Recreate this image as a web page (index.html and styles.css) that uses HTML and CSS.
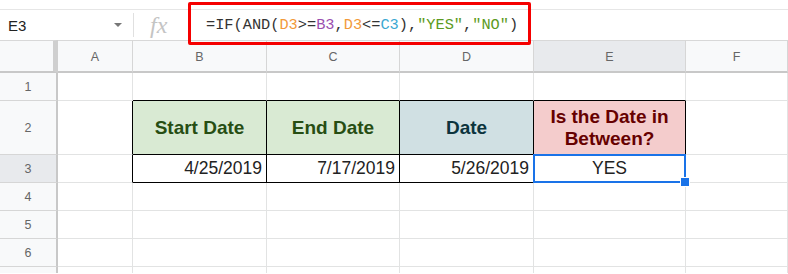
FILE: index.html
```html
<!DOCTYPE html>
<html lang="en">
<head>
    <meta charset="UTF-8">
    <meta name="viewport" content="width=device-width, initial-scale=1.0">
    <title>Sheet - date between check</title>
    <link rel="stylesheet" href="styles.css">
</head>
<body>
    <div class="toolbar-gap"></div>

    <div class="formula-bar">
        <div class="name-box">
            <span class="name-ref">E3</span>
            <span class="caret"></span>
        </div>
        <div class="fx">fx</div>
        <div class="formula">=IF(AND(<span class="ref-d">D3</span>&gt;=<span class="ref-b">B3</span>,<span class="ref-d">D3</span>&lt;=<span class="ref-c">C3</span>),<span class="str">"YES"</span>,<span class="str">"NO"</span>)</div>
        <div class="callout"></div>
    </div>

    <div class="sheet">
        <!-- column headers -->
        <div class="cell corner"></div>
        <div class="cell col-head">A</div>
        <div class="cell col-head">B</div>
        <div class="cell col-head">C</div>
        <div class="cell col-head">D</div>
        <div class="cell col-head active">E</div>
        <div class="cell col-head">F</div>

        <!-- row 1 -->
        <div class="cell row-head">1</div>
        <div class="cell"></div>
        <div class="cell top-edge"></div>
        <div class="cell top-edge"></div>
        <div class="cell top-edge"></div>
        <div class="cell top-edge"></div>
        <div class="cell"></div>

        <!-- row 2 -->
        <div class="cell row-head">2</div>
        <div class="cell left-edge"></div>
        <div class="cell boxed title green">Start Date</div>
        <div class="cell boxed title green">End Date</div>
        <div class="cell boxed title teal">Date</div>
        <div class="cell boxed title pink">Is the Date in<br>Between?</div>
        <div class="cell"></div>

        <!-- row 3 -->
        <div class="cell row-head active">3</div>
        <div class="cell left-edge"></div>
        <div class="cell boxed num">4/25/2019</div>
        <div class="cell boxed num">7/17/2019</div>
        <div class="cell boxed num">5/26/2019</div>
        <div class="cell boxed center selected">YES</div>
        <div class="cell"></div>

        <!-- rows 4-6 -->
        <div class="cell row-head">4</div>
        <div class="cell"></div><div class="cell"></div><div class="cell"></div>
        <div class="cell"></div><div class="cell"></div><div class="cell"></div>

        <div class="cell row-head">5</div>
        <div class="cell"></div><div class="cell"></div><div class="cell"></div>
        <div class="cell"></div><div class="cell"></div><div class="cell"></div>

        <div class="cell row-head">6</div>
        <div class="cell"></div><div class="cell"></div><div class="cell"></div>
        <div class="cell"></div><div class="cell"></div><div class="cell"></div>

        <!-- row 7, only its top edge is in view -->
        <div class="cell row-head"></div>
        <div class="cell"></div><div class="cell"></div><div class="cell"></div>
        <div class="cell"></div><div class="cell"></div><div class="cell"></div>
    </div>
</body>
</html>
```

FILE: styles.css
```css
* {
    margin: 0;
    padding: 0;
    box-sizing: border-box;
}
:root {
    --grid-line: #e2e3e3;
    --head-bg: #f8f9fa;
    --head-active: #e8eaed;
    --head-text: #666;
    --select-blue: #1a73e8;
}
body {
    font-family: 'Liberation Sans', Arial, sans-serif;
    background: #fff;
    color: #222;
    overflow: hidden;
}
.toolbar-gap {
    height: 10px;
    border-bottom: 1px solid #e6e6e6;
}
.formula-bar {
    position: relative;
    display: flex;
    align-items: center;
    height: 30px;
}
.name-box {
    width: 134px;
    height: 24px;
    display: flex;
    align-items: center;
    justify-content: space-between;
    padding: 0 11px 0 8px;
    border-right: 1px solid #e0e0e0;
}
.name-ref {
    font-size: 15px;
    color: #222;
}
.caret {
    width: 0;
    height: 0;
    border-left: 4px solid transparent;
    border-right: 4px solid transparent;
    border-top: 4px solid #777;
}
.fx {
    width: 54px;
    padding-left: 16px;
    font-family: 'Liberation Serif', serif;
    font-style: italic;
    font-size: 24px;
    color: #c4c4c4;
    line-height: 1;
}
.formula {
    padding-left: 18px;
    font-family: 'Liberation Mono', monospace;
    font-size: 15.3px;
    color: #333;
    white-space: nowrap;
}
.ref-d { color: #f29a3a; }
.ref-b { color: #9a4fb0; }
.ref-c { color: #3aa8d2; }
.str { color: #5c9a22; }
.callout {
    position: absolute;
    left: 188px;
    top: -8px;
    width: 343px;
    height: 43px;
    border: 3px solid #f50000;
    border-radius: 2px;
}
.sheet {
    display: grid;
    grid-template-columns: 58px 75px 134px 133px 134px 152px 1fr;
    grid-template-rows: 33px 28px 54px 28px 28px 28px 28px 7px;
    height: 233px;
    overflow: hidden;
}
.cell {
    display: flex;
    align-items: center;
    justify-content: center;
    border-right: 1px solid var(--grid-line);
    border-bottom: 1px solid var(--grid-line);
    font-size: 17.5px;
}
.corner {
    background: var(--head-bg);
    border-right: 5px solid #cfcfcf;
    border-bottom: 2px solid #c8c8c8;
    border-top: 1px solid #d8d8d8;
}
.col-head {
    background: var(--head-bg);
    color: var(--head-text);
    font-size: 12.5px;
    padding-top: 2px;
    border-top: 1px solid #d8d8d8;
    border-right-color: #d6d6d6;
    border-bottom: 2px solid #c8c8c8;
}
.row-head {
    background: var(--head-bg);
    color: var(--head-text);
    font-size: 12.5px;
    border-right: 2px solid #c8c8c8;
    border-bottom-color: #d6d6d6;
}
.col-head.active,
.row-head.active {
    background: var(--head-active);
}
.top-edge {
    border-bottom-color: #000;
}
.left-edge {
    border-right-color: #000;
}
.boxed {
    border-right-color: #000;
    border-bottom-color: #000;
}
.title {
    font-weight: 700;
    font-size: 19px;
    line-height: 22px;
    text-align: center;
}
.green {
    background: #d9ead3;
    color: #274e13;
}
.teal {
    background: #d0e0e3;
    color: #0c343d;
}
.pink {
    background: #f4cccc;
    color: #660000;
}
.num {
    justify-content: flex-end;
    padding-right: 4px;
}
.selected {
    position: relative;
}
.selected::after {
    content: "";
    position: absolute;
    left: -1px;
    top: -1px;
    right: -1px;
    bottom: -1px;
    border: 2px solid var(--select-blue);
}
.selected::before {
    content: "";
    position: absolute;
    right: -5px;
    bottom: -5px;
    width: 8px;
    height: 8px;
    background: var(--select-blue);
    border: 1px solid #fff;
    z-index: 2;
}
```
